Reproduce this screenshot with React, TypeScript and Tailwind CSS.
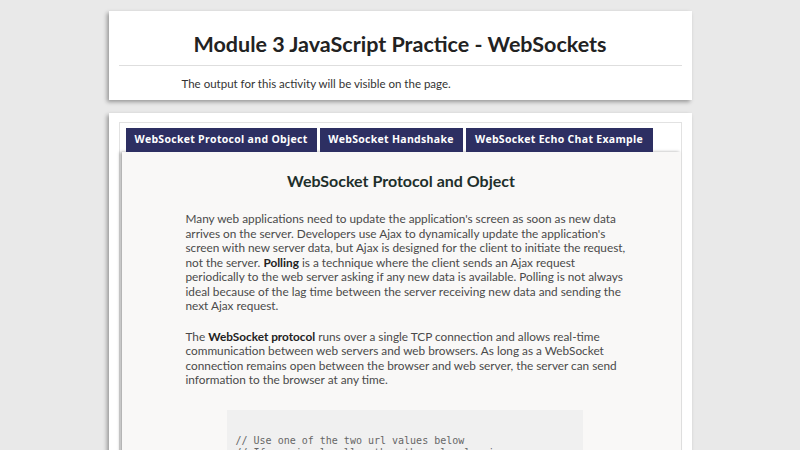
import React from 'react';

const tabs = [
  { label: 'WebSocket Protocol and Object', w: 'w-[191px]' },
  { label: 'WebSocket Handshake', w: 'w-[143px]' },
  { label: 'WebSocket Echo Chat Example', w: 'w-[187px]' },
];

export default function App() {
  return (
    <div className="min-h-screen w-full bg-[#e9e9e9] overflow-hidden" style={{ fontFamily: 'Lato, "Open Sans", sans-serif' }}>
      {/* Header card */}
      <div className="mx-auto mt-[11px] w-[583px] h-[89px] bg-white shadow-[-2px_2px_4px_rgba(0,0,0,0.35)] pt-[19px] px-[10px]">
        <h1 className="text-center text-[21.5px] leading-[28px] font-bold text-[#222]">
          Module 3 JavaScript Practice - WebSockets
        </h1>
        <hr className="mt-[7px] border-t border-[#dedede]" />
        <p className="mt-[10px] pl-[63px] text-[11.5px] leading-[16px] text-[#333]">
          The output for this activity will be visible on the page.
        </p>
      </div>

      {/* Content card */}
      <div className="mx-auto mt-[13px] w-[583px] bg-white shadow-[-2px_2px_4px_rgba(0,0,0,0.35)] pt-[9px] px-[10px]">
        <div className="border border-[#e2e2e2] pt-[5px]">
          <div className="flex gap-[3px] pl-[6px]">
            {tabs.map((t) => (
              <div
                key={t.label}
                className={`${t.w} flex-none h-[24px] bg-[#2d2f62] text-white text-[10.5px] font-bold tracking-[0.3px] whitespace-nowrap flex items-center justify-center`}
                style={{ fontFamily: '"Open Sans", sans-serif' }}
              >
                {t.label}
              </div>
            ))}
          </div>
          <div className="ml-[2px] bg-[#f9f8f7] shadow-[-2px_0_3px_rgba(0,0,0,0.35)] pt-[19px] pb-[40px]">
            <h2 className="text-center text-[16px] leading-[20px] font-bold text-[#1e2f2b]">
              WebSocket Protocol and Object
            </h2>
            <div className="pl-[64px] text-[11.8px] leading-[14.5px] text-[#4a4a4a] whitespace-nowrap">
              <p className="mt-[21px]">
                Many web applications need to update the application's screen as soon as new data<br />
                arrives on the server. Developers use Ajax to dynamically update the application's<br />
                screen with new server data, but Ajax is designed for the client to initiate the request,<br />
                not the server. <strong className="text-[#222]">Polling</strong> is a technique where the client sends an Ajax request<br />
                periodically to the web server asking if any new data is available. Polling is not always<br />
                ideal because of the lag time between the server receiving new data and sending the<br />
                next Ajax request.
              </p>
              <p className="mt-[16px]">
                The <strong className="text-[#222]">WebSocket protocol</strong> runs over a single TCP connection and allows real-time<br />
                communication between web servers and web browsers. As long as a WebSocket<br />
                connection remains open between the browser and web server, the server can send<br />
                information to the browser at any time.
              </p>
            </div>
            <div className="ml-[105px] mt-[22px] w-[356px] bg-[#f0f0f0] pt-[25px] pl-[9px] pb-[10px]">
              <pre className="text-[10px] leading-[12px] text-[#666]" style={{ fontFamily: '"DejaVu Sans Mono", monospace' }}>
{`// Use one of the two url values below
// If running locally, then the url value is
const url = "ws://localhost:3000";`}
              </pre>
            </div>
          </div>
        </div>
      </div>
    </div>
  );
}
